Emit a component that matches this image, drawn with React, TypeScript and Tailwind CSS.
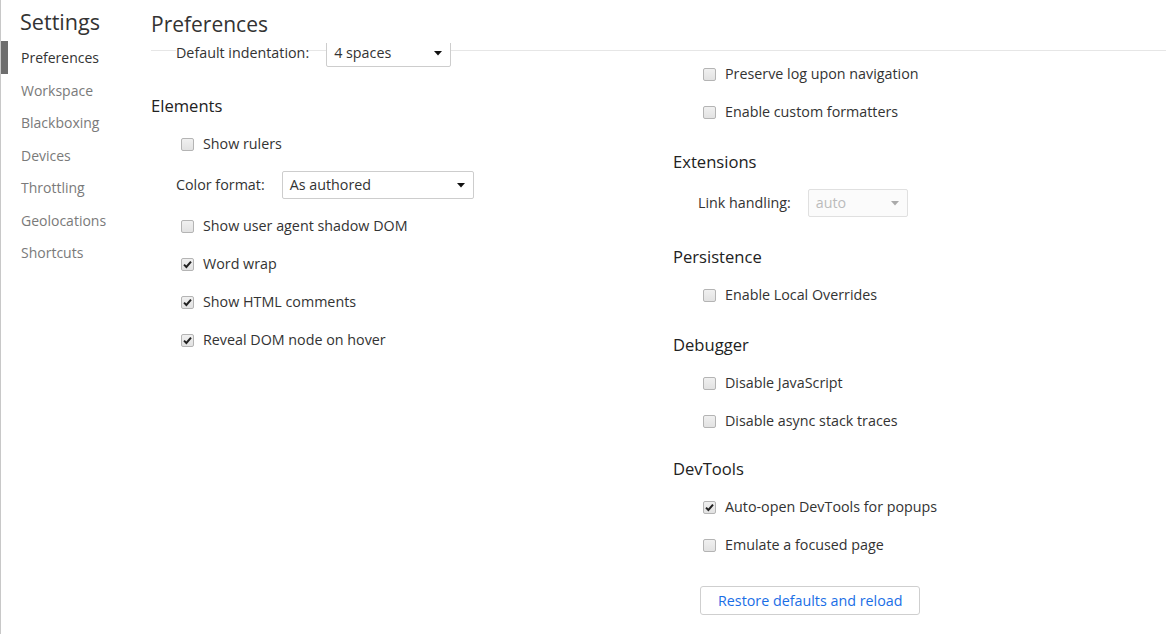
import React from "react";

type CheckProps = { label: string; checked?: boolean };

function Check({ label, checked }: CheckProps) {
  return (
    <div className="flex h-[38px] items-center pl-[30px]">
      <span className="flex h-[13px] w-[13px] items-center justify-center rounded-[2px] border border-[#b4b4b4] bg-gradient-to-b from-[#f0f0f0] to-[#e2e2e2]">
        {checked ? (
          <svg width="11" height="11" viewBox="0 0 11 11">
            <path d="M2 5.6 L4.4 8 L9 2.6" fill="none" stroke="#222" strokeWidth="2" />
          </svg>
        ) : null}
      </span>
      <span className="ml-[9px] text-[#333]">{label}</span>
    </div>
  );
}

type SelectRowProps = {
  label: string;
  value: string;
  width: string;
  disabled?: boolean;
};

function SelectRow({ label, value, width, disabled }: SelectRowProps) {
  return (
    <div className="flex h-[44px] items-center pl-[25px]">
      <span className="relative z-10 bg-white leading-[12px] text-[#333]">{label}</span>
      <div
        className={`relative z-10 ml-[17px] flex h-[28px] items-center justify-between rounded-[2px] border pl-[7px] pr-[8px] ${width} ${
          disabled ? "border-[#e0e0e0] bg-[#fbfbfb] text-[#bbb]" : "border-[#cdcdcd] bg-white text-[#333]"
        }`}
      >
        <span className="leading-[12px]">{value}</span>
        <svg width="8" height="5" viewBox="0 0 8 5">
          <path d="M0 0 H8 L4 4.5 Z" fill={disabled ? "#aaa" : "#111"} />
        </svg>
      </div>
    </div>
  );
}

function Heading({ children, className = "" }: { children: React.ReactNode; className?: string }) {
  return (
    <div className={`flex h-[38px] items-center text-[16.6px] text-[#222] ${className}`}>{children}</div>
  );
}

const navItems = [
  "Preferences",
  "Workspace",
  "Blackboxing",
  "Devices",
  "Throttling",
  "Geolocations",
  "Shortcuts",
];

export default function App() {
  return (
    <div
      className="flex h-[634px] w-[1166px] overflow-hidden border-l border-[#c8c8c8] bg-white text-[14.3px]"
      style={{ fontFamily: '"Segoe UI", "Open Sans", "Noto Sans", sans-serif' }}
    >
      <aside className="w-[150px] shrink-0">
        <div className="flex h-[41px] items-center pl-[19px] pt-[3px] text-[21.6px] text-[#333]">Settings</div>
        <nav>
          {navItems.map((item, i) => (
            <div key={item} className="flex h-[32.5px] items-center">
              <span className={`h-full w-[7px] ${i === 0 ? "bg-[#6e6e6e]" : ""}`} />
              <span className={`ml-[13px] pt-[1px] text-[14px] ${i === 0 ? "text-[#333]" : "text-[#7a7a7a]"}`}>
                {item}
              </span>
            </div>
          ))}
        </nav>
      </aside>

      <main className="flex min-w-0 flex-1 flex-col">
        <div className="h-[43px] shrink-0 pt-[10px] text-[21px] leading-[28px] text-[#333]">Preferences</div>
        <div className="relative flex flex-1 overflow-hidden">
          <div className="absolute left-0 right-0 top-[7px] h-px bg-[#e6e6e6]" />

          <section className="-mt-[12px] w-[522px] shrink-0">
            <SelectRow label="Default indentation:" value="4 spaces" width="w-[125px]" />
            <Heading className="mt-[12px]">Elements</Heading>
            <Check label="Show rulers" />
            <SelectRow label="Color format:" value="As authored" width="w-[192px]" />
            <Check label="Show user agent shadow DOM" />
            <Check label="Word wrap" checked />
            <Check label="Show HTML comments" checked />
            <Check label="Reveal DOM node on hover" checked />
          </section>

          <section className="mt-[12px] min-w-0 flex-1">
            <Check label="Preserve log upon navigation" />
            <Check label="Enable custom formatters" />
            <Heading className="mt-[12px]">Extensions</Heading>
            <SelectRow label="Link handling:" value="auto" width="w-[100px]" disabled />
            <Heading className="mt-[13px]">Persistence</Heading>
            <Check label="Enable Local Overrides" />
            <Heading className="mt-[12px]">Debugger</Heading>
            <Check label="Disable JavaScript" />
            <Check label="Disable async stack traces" />
            <Heading className="mt-[10px]">DevTools</Heading>
            <Check label="Auto-open DevTools for popups" checked />
            <Check label="Emulate a focused page" />
            <button className="ml-[27px] mt-[22px] h-[29px] rounded-[3px] border border-[#cfcfcf] bg-white px-[17px] text-[#1a6ee6]">
              Restore defaults and reload
            </button>
          </section>
        </div>
      </main>
    </div>
  );
}
